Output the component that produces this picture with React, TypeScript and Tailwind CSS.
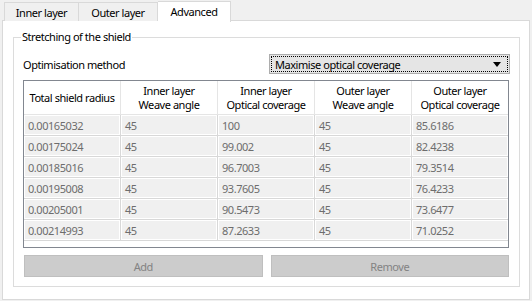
import React from "react";

const rows = [
  ["0.00165032", "45", "100", "45", "85.6186"],
  ["0.00175024", "45", "99.002", "45", "82.4238"],
  ["0.00185016", "45", "96.7003", "45", "79.3514"],
  ["0.00195008", "45", "93.7605", "45", "76.4233"],
  ["0.00205001", "45", "90.5473", "45", "73.6477"],
  ["0.00214993", "45", "87.2633", "45", "71.0252"],
];

const headers: string[][] = [
  ["Total shield radius"],
  ["Inner layer", "Weave angle"],
  ["Inner layer", "Optical coverage"],
  ["Outer layer", "Weave angle"],
  ["Outer layer", "Optical coverage"],
];

export default function App() {
  return (
    <div
      className="w-[532px] h-[301px] bg-[#f0f0f0] text-[11px] tracking-[-0.45px] text-black overflow-hidden"
      style={{ fontFamily: '"Noto Sans", sans-serif' }}
    >
      {/* Tabs */}
      <div className="flex items-end h-[21px] pl-[4px] relative z-10">
        <div className="h-[19px] w-[75px] border border-[#d9d9d9] border-b-0 bg-[#f0f0f0] flex items-center justify-center leading-none pt-[1px]">
          Inner layer
        </div>
        <div className="h-[19px] w-[79px] border border-[#d9d9d9] border-b-0 border-l-0 bg-[#f0f0f0] flex items-center justify-center leading-none pt-[1px]">
          Outer layer
        </div>
        <div className="h-[21px] w-[73px] border border-[#d9d9d9] border-b-0 border-l-0 bg-white flex items-center justify-center leading-none pb-[2px] mb-[-1px]">
          Advanced
        </div>
      </div>
      {/* Panel */}
      <div className="mx-[2px] mt-[-1px] h-[280px] border border-[#d9d9d9] bg-white pt-[16px] pl-[10px] pr-[9px]">
        {/* Group box */}
        <div className="relative h-[250px] border border-[#dcdcdc] pt-[16px] pl-[9px] pr-[10px]">
          <div className="absolute left-[7px] top-[-9px] bg-white px-[1px] leading-[16px]">
            Stretching of the shield
          </div>
          <div className="flex items-center h-[20px] justify-between">
            <span className="leading-none">Optimisation method</span>
            <div className="mr-[-1px] w-[241px] h-[20px] border border-[#adadad] bg-[#e5e5e5] p-[1px]">
              <div className="h-full border border-dotted border-black flex items-center justify-between pl-[3px] pr-[6px]">
                <span className="leading-none">Maximise optical coverage</span>
                <svg width="8" height="5" viewBox="0 0 8 5">
                  <path d="M0 0 H8 L4 5 Z" fill="#000" />
                </svg>
              </div>
            </div>
          </div>
          {/* Table */}
          <div className="mt-[6px] h-[168px] w-[486px] border border-[#828790] bg-white">
            <div className="grid grid-cols-[97px_97px_97px_97px_96px] h-[34px] border-b border-[#e5e5e5]">
              {headers.map((h, i) => (
                <div
                  key={i}
                  className={`flex flex-col items-center justify-center leading-[14px] whitespace-nowrap ${i < 4 ? "border-r border-[#e5e5e5]" : ""}`}
                >
                  {h.map((t, j) => (
                    <span key={j}>{t}</span>
                  ))}
                </div>
              ))}
            </div>
            {rows.map((r, ri) => (
              <div
                key={ri}
                className="grid grid-cols-[97px_97px_97px_97px_96px] h-[21px] border-b border-[#d8d8d8]"
              >
                {r.map((c, ci) => (
                  <div
                    key={ci}
                    className={`${ci < 4 ? "border-r border-[#d8d8d8]" : ""}`}
                  >
                    <div className="h-full border border-white bg-[#f0f0f0] pl-[3px] flex items-center text-[#6d6d6d] leading-none">
                      {c}
                    </div>
                  </div>
                ))}
              </div>
            ))}
          </div>
          {/* Buttons */}
          <div className="flex gap-[8px] mt-[7px] ml-[1px]">
            <div className="w-[239px] h-[22px] bg-[#cccccc] border border-[#bfbfbf] flex items-center justify-center text-[#838383] leading-none">
              Add
            </div>
            <div className="w-[239px] h-[22px] bg-[#cccccc] border border-[#bfbfbf] flex items-center justify-center text-[#838383] leading-none">
              Remove
            </div>
          </div>
        </div>
      </div>
    </div>
  );
}
